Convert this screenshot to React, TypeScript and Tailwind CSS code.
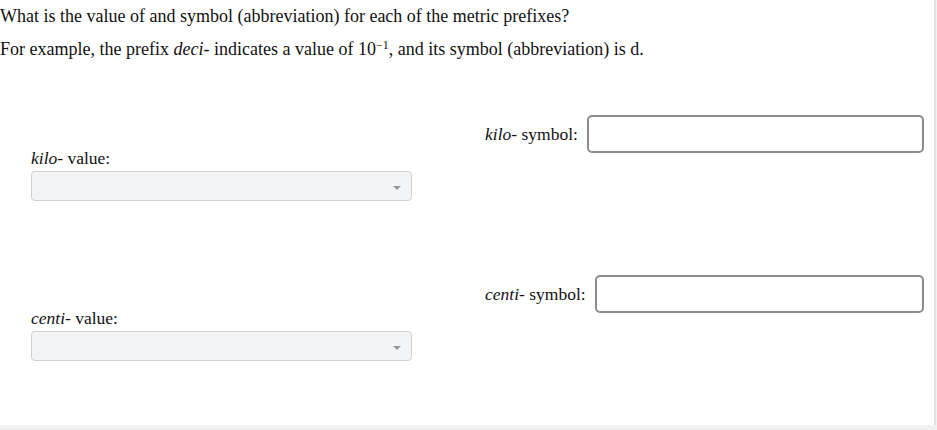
import React from "react";

type Prefix = {
	name: string;
	inputWidth: string;
};

const prefixes: Prefix[] = [
	{ name: "kilo", inputWidth: "w-[337px]" },
	{ name: "centi", inputWidth: "w-[329px]" },
];

function SelectBox() {
	return (
		<div className="relative mt-[4px] h-[30px] w-[381px] rounded-[4px] border border-[#cfd1d4] bg-[#f3f4f6]">
			<span className="absolute right-[10px] top-[14px] h-0 w-0 border-x-[4px] border-t-[4px] border-x-transparent border-t-[#999]" />
		</div>
	);
}

export default function App() {
	return (
		<div className="h-[430px] bg-[#f2f2f2] font-[family-name:Liberation_Serif,serif] text-[18px] text-[#111]">
			<div className="h-[425px] w-[936px] border-r-2 border-[#e2e2e2] bg-white">
				<p className="h-[23px] pt-[5px] leading-[23px] box-content">
					What is the value of and symbol (abbreviation) for each of the metric prefixes?
				</p>
				<p className="mt-[10px] h-[23px] leading-[23px]">
					For example, the prefix <i>deci-</i> indicates a value of 10
					<sup className="text-[12px]">−1</sup>, and its symbol (abbreviation) is d.
				</p>
				<div className="mt-[54px]">
					{prefixes.map((p) => (
						<div key={p.name} className="flex h-[160px] items-start text-[17.5px]">
							<div className="ml-[31px] w-[381px] pt-[34px]">
								<div className="h-[18px] leading-[18px]">
									<i>{p.name}</i>- value:
								</div>
								<SelectBox />
							</div>
							<div className="ml-[73px] flex w-[439px] items-center justify-between">
								<span>
									<i>{p.name}</i>- symbol:
								</span>
								<div
									className={`h-[38px] ${p.inputWidth} rounded-[5px] border-2 border-[#8c8c8c] bg-white`}
								/>
							</div>
						</div>
					))}
				</div>
			</div>
		</div>
	);
}
